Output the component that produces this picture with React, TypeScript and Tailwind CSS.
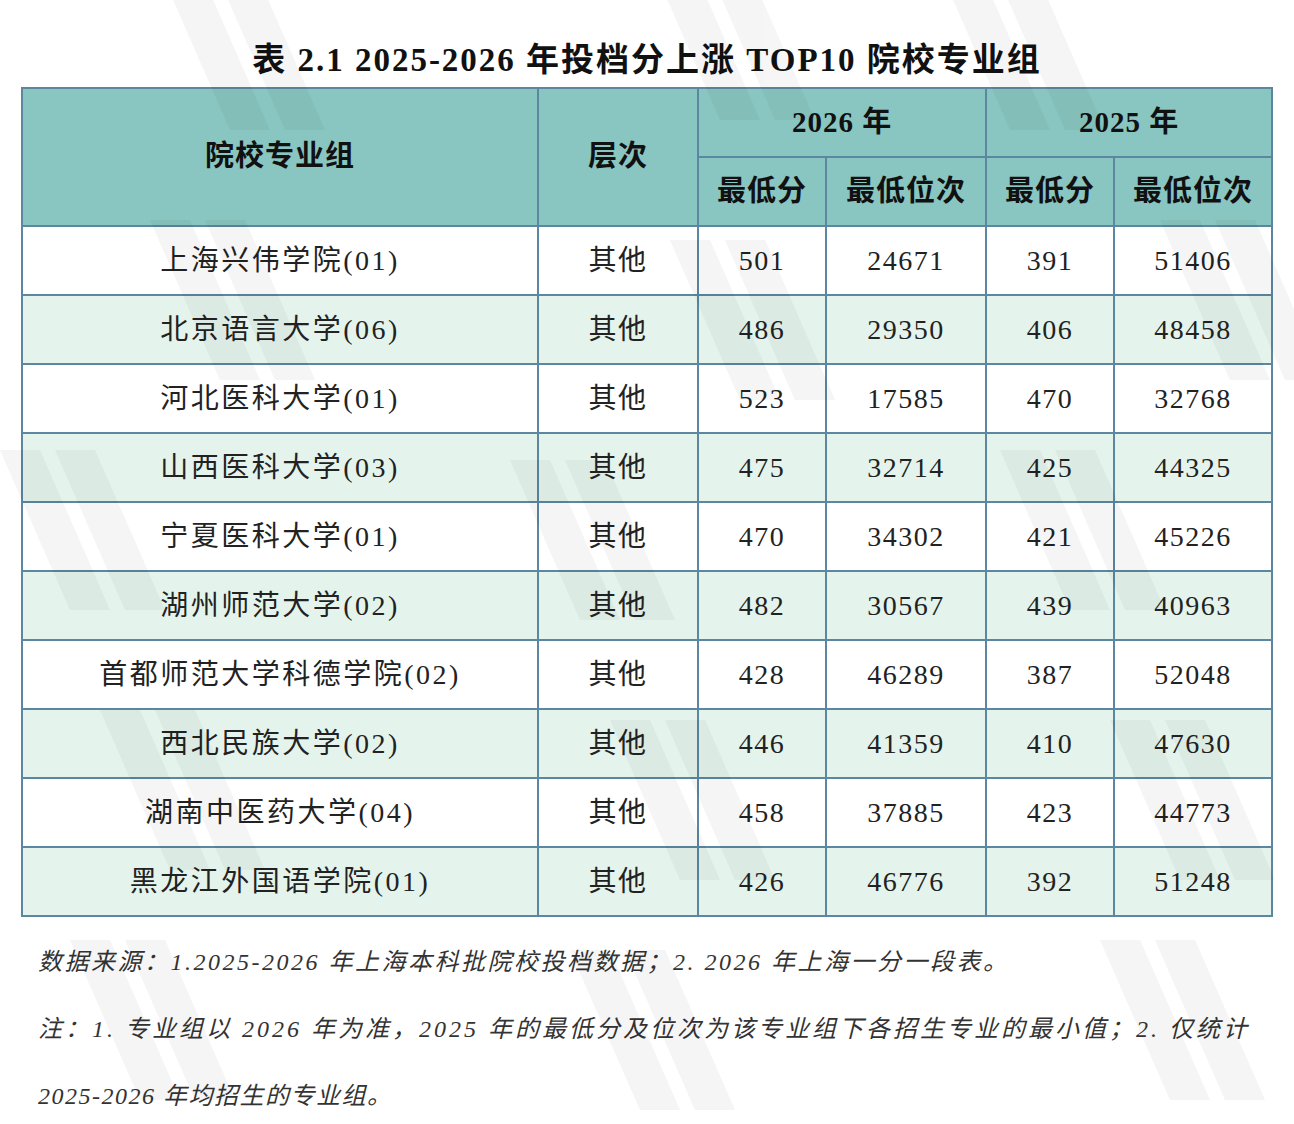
import React from 'react'

const rows = [
  { name: '上海兴伟学院(01)', level: '其他', s26: '501', r26: '24671', s25: '391', r25: '51406' },
  { name: '北京语言大学(06)', level: '其他', s26: '486', r26: '29350', s25: '406', r25: '48458' },
  { name: '河北医科大学(01)', level: '其他', s26: '523', r26: '17585', s25: '470', r25: '32768' },
  { name: '山西医科大学(03)', level: '其他', s26: '475', r26: '32714', s25: '425', r25: '44325' },
  { name: '宁夏医科大学(01)', level: '其他', s26: '470', r26: '34302', s25: '421', r25: '45226' },
  { name: '湖州师范大学(02)', level: '其他', s26: '482', r26: '30567', s25: '439', r25: '40963' },
  { name: '首都师范大学科德学院(02)', level: '其他', s26: '428', r26: '46289', s25: '387', r25: '52048' },
  { name: '西北民族大学(02)', level: '其他', s26: '446', r26: '41359', s25: '410', r25: '47630' },
  { name: '湖南中医药大学(04)', level: '其他', s26: '458', r26: '37885', s25: '423', r25: '44773' },
  { name: '黑龙江外国语学院(01)', level: '其他', s26: '426', r26: '46776', s25: '392', r25: '51248' },
]

// faint watermark logos spread over the page
const marks = [
  [150, -50], [640, -60], [930, -50],
  [140, 200], [660, 220], [1150, 200],
  [-10, 430], [500, 440], [990, 430],
  [600, 700], [1100, 700], [90, 690],
  [60, 920], [560, 930], [1090, 920],
]

function Watermark({ x, y }: { x: number; y: number }) {
  return (
    <svg
      className="absolute pointer-events-none"
      style={{ left: x, top: y }}
      width="200"
      height="200"
      viewBox="0 0 200 200"
    >
      <g fill="#000" opacity="0.035">
        <polygon points="10,20 50,20 120,180 80,180" />
        <polygon points="65,20 105,20 175,180 135,180" />
      </g>
    </svg>
  )
}

const font = "font-['Liberation_Serif','Noto_Sans_CJK_SC',serif]"

export default function App() {
  return (
    <div className={`relative overflow-hidden w-[1294px] h-[1124px] bg-white text-[#222] ${font}`}>
      <div className="h-[87px] pt-[40px] text-center text-[33px] leading-[40px] font-bold text-[#111] tracking-[2px]">
        表 2.1 2025-2026 年投档分上涨 TOP10 院校专业组
      </div>

      <table className="ml-[21px] w-[1250px] table-fixed border-collapse border-2 border-[#5b87a0] text-center">
        <colgroup>
          <col className="w-[516px]" />
          <col className="w-[160px]" />
          <col className="w-[128px]" />
          <col className="w-[160px]" />
          <col className="w-[128px]" />
          <col className="w-[158px]" />
        </colgroup>
        <thead className="bg-[#8ac6c1] text-[29px] font-bold text-[#111] tracking-[1px]">
          <tr className="h-[69px]">
            <th rowSpan={2} className="border-2 border-[#5b87a0] font-bold">院校专业组</th>
            <th rowSpan={2} className="border-2 border-[#5b87a0] font-bold">层次</th>
            <th colSpan={2} className="border-2 border-[#5b87a0] font-bold">2026 年</th>
            <th colSpan={2} className="border-2 border-[#5b87a0] font-bold">2025 年</th>
          </tr>
          <tr className="h-[69px]">
            <th className="border-2 border-[#5b87a0] font-bold">最低分</th>
            <th className="border-2 border-[#5b87a0] font-bold">最低位次</th>
            <th className="border-2 border-[#5b87a0] font-bold">最低分</th>
            <th className="border-2 border-[#5b87a0] font-bold">最低位次</th>
          </tr>
        </thead>
        <tbody className="text-[28px]">
          {rows.map((r, i) => (
            <tr key={i} className={`h-[69px] ${i % 2 === 1 ? 'bg-[#e4f4ec]' : 'bg-white'}`}>
              <td className="border-2 border-[#5b87a0] tracking-[2.5px]">{r.name}</td>
              <td className="border-2 border-[#5b87a0] tracking-[1.5px]">{r.level}</td>
              <td className="border-2 border-[#5b87a0] tracking-[1.5px]">{r.s26}</td>
              <td className="border-2 border-[#5b87a0] tracking-[1.5px]">{r.r26}</td>
              <td className="border-2 border-[#5b87a0] tracking-[1.5px]">{r.s25}</td>
              <td className="border-2 border-[#5b87a0] tracking-[1.5px]">{r.r25}</td>
            </tr>
          ))}
        </tbody>
      </table>

      <div className="mt-[12px] pl-[38px] text-[24px] leading-[67px] italic text-[#333]">
        <p className="tracking-[2.5px]">数据来源：1.2025-2026 年上海本科批院校投档数据；2. 2026 年上海一分一段表。</p>
        <p className="tracking-[3px]">
          注：1. 专业组以 2026 年为准，2025 年的最低分及位次为该专业组下各招生专业的最小值；2. 仅统计
          <br />
          <span className="tracking-[1.5px]">2025-2026 年均招生的专业组。</span>
        </p>
      </div>

      {marks.map(([x, y], i) => (
        <Watermark key={i} x={x} y={y} />
      ))}
    </div>
  )
}
